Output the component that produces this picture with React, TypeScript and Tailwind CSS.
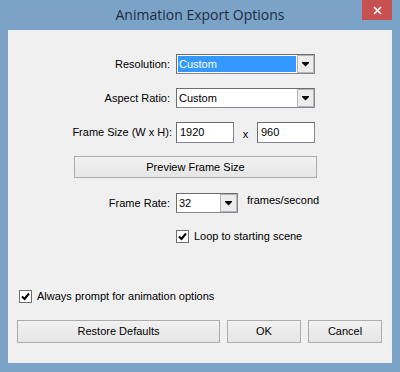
import React from "react";

const font = { fontFamily: "Tahoma, 'Liberation Sans', Arial, sans-serif" };

function Arrow() {
  return (
    <svg width="7" height="5" viewBox="0 0 7 5">
      <rect x="0" y="0" width="7" height="1" fill="#000" />
      <path d="M0 1 H7 L3.5 4.5 Z" fill="#000" />
    </svg>
  );
}

function Select({ value, width, highlight }: { value: string; width: string; highlight?: boolean }) {
  return (
    <div className={`flex h-[20px] ${width} border border-[#828790] border-t-[#6d6d6d] border-l-[#6d6d6d] bg-white`}>
      <div className="flex-1 flex items-center p-[1px]">
        <div className={`h-full w-full flex items-center pl-[1px] ${highlight ? "bg-[#3399ff] text-white" : "text-black"}`}>{value}</div>
      </div>
      <div className="w-[17px] h-full border border-[#b5b5b5] bg-[#ececec] flex items-center justify-center">
        <Arrow />
      </div>
    </div>
  );
}

function Check() {
  return (
    <div className="w-[13px] h-[13px] border border-[#707070] bg-white flex items-center justify-center shrink-0">
      <svg width="9" height="9" viewBox="0 0 9 9">
        <path d="M1 4.5 L3.5 7 L8 1.5" stroke="#000" strokeWidth="2" fill="none" />
      </svg>
    </div>
  );
}

function Btn({ children, className }: { children: React.ReactNode; className: string }) {
  return (
    <div className={`flex items-center justify-center border border-[#acacac] bg-gradient-to-b from-[#f2f2f2] to-[#e5e5e5] text-black ${className}`}>
      {children}
    </div>
  );
}

const boxCls = "h-[21px] border border-[#828790] border-t-[#6d6d6d] border-l-[#6d6d6d] bg-white flex items-center pl-[3px]";

export default function App() {
  return (
    <div className="w-[400px] h-[372px] bg-[#7ba2c7] flex flex-col" style={font}>
      <div className="h-[30px] grid grid-cols-[1fr_auto_1fr] items-start">
        <div />
        <div className="pt-[5px] text-[14px] leading-[20px] text-[#1f2d3f]" style={{ fontFamily: "'Open Sans', 'Noto Sans', sans-serif" }}>
          Animation Export Options
        </div>
        <div className="flex justify-end pr-[8px]">
          <div className="w-[30px] h-[20px] bg-[#c75050] flex items-center justify-center">
            <svg width="9" height="9" viewBox="0 0 9 9">
              <path d="M1 1 L8 8 M8 1 L1 8" stroke="#fff" strokeWidth="1.6" />
            </svg>
          </div>
        </div>
      </div>
      <div className="mx-[8px] h-[333px] bg-[#f0f0f0] flex flex-col text-[11px] leading-[13px] text-black">
        <div className="flex flex-col pt-[24px]">
          <div className="flex items-center h-[20px]">
            <div className="w-[163px] text-right pr-[1px]">Resolution:</div>
            <div className="ml-[5px]"><Select value="Custom" width="w-[139px]" highlight /></div>
          </div>
          <div className="flex items-center h-[20px] mt-[14px]">
            <div className="w-[163px] text-right pr-[1px]">Aspect Ratio:</div>
            <div className="ml-[5px]"><Select value="Custom" width="w-[139px]" /></div>
          </div>
          <div className="flex items-center h-[21px] mt-[14px]">
            <div className="w-[164px] text-right">Frame Size (W x H):</div>
            <div className={`ml-[4px] w-[58px] ${boxCls}`}>1920</div>
            <div className="w-[23px] text-center pt-[3px]">x</div>
            <div className={`w-[58px] ${boxCls}`}>960</div>
          </div>
          <div className="flex mt-[13px]">
            <Btn className="ml-[66px] w-[243px] h-[22px]">Preview Frame Size</Btn>
          </div>
          <div className="flex items-center h-[20px] mt-[15px]">
            <div className="w-[163px] text-right pr-[1px]">Frame Rate:</div>
            <div className="ml-[5px]"><Select value="32" width="w-[62px]" /></div>
            <div className="ml-[9px] -mt-[6px]">frames/second</div>
          </div>
          <div className="flex items-center h-[13px] mt-[17px] ml-[168px]">
            <Check />
            <div className="ml-[5px]">Loop to starting scene</div>
          </div>
        </div>
        <div className="flex items-center h-[13px] mt-[47px] ml-[11px]">
          <Check />
          <div className="ml-[5px]">Always prompt for animation options</div>
        </div>
        <div className="flex mt-[17px] ml-[9px]">
          <Btn className="w-[203px] h-[23px]">Restore Defaults</Btn>
          <Btn className="ml-[7px] w-[74px] h-[23px]">OK</Btn>
          <Btn className="ml-[7px] w-[74px] h-[23px]">Cancel</Btn>
        </div>
      </div>
    </div>
  );
}
